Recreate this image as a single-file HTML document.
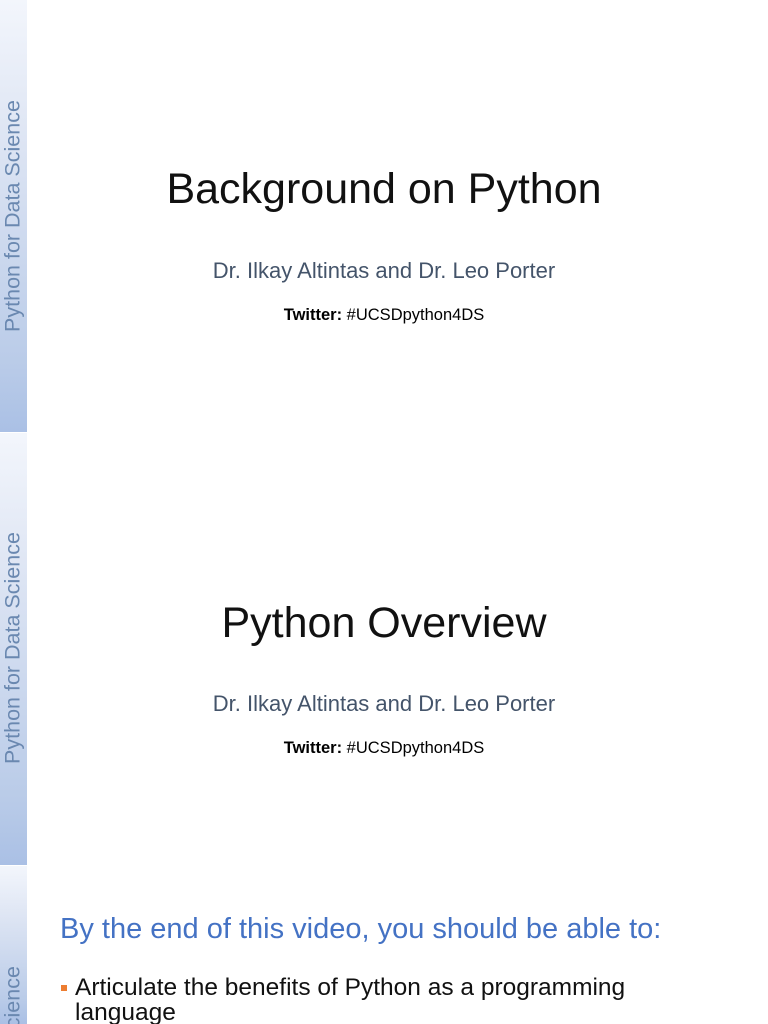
<!DOCTYPE html>
<html><head><meta charset="utf-8"><style>
html,body{margin:0;width:768px;height:1024px;overflow:hidden}
body{background:#fff;position:relative;font-family:"Liberation Sans",sans-serif}
#w{position:absolute;left:0;top:0;width:768px;height:1024px;overflow:hidden}
.strip{position:absolute;left:0;width:27px;height:432px;background:linear-gradient(#f3f6fc,#dfe6f4 30%,#b9cbe8 85%,#aac0e5)}
.vt{position:absolute;width:300px;text-align:center;transform:translate(-50%,-50%) rotate(-90deg);color:#6a88b0;font-size:21.5px;white-space:nowrap}
.a{position:absolute;white-space:nowrap}
.t{font-size:43px;color:#111;width:768px;left:0;text-align:center}
.s{font-size:22px;color:#44546a;width:768px;left:0;text-align:center}
.w{font-size:16.5px;color:#000;width:768px;left:0;text-align:center}
</style></head><body><div id="w">
<div class="strip" style="top:0"></div>
<div class="strip" style="top:433px"></div>
<div class="strip" style="top:866px;height:158px"></div>
<div class="vt" style="top:216px;left:13px">Python for Data Science</div>
<div class="vt" style="top:648px;left:13px">Python for Data Science</div>
<div class="vt" style="top:1082px;left:13px">Python for Data Science</div>

<div class="a t" style="top:165px">Background on Python</div>
<div class="a s" style="top:258px">Dr. Ilkay Altintas and Dr. Leo Porter</div>
<div class="a w" style="top:306px"><b>Twitter:</b> #UCSDpython4DS</div>

<div class="a t" style="top:599px">Python Overview</div>
<div class="a s" style="top:691px">Dr. Ilkay Altintas and Dr. Leo Porter</div>
<div class="a w" style="top:739px"><b>Twitter:</b> #UCSDpython4DS</div>

<div class="a" style="left:60px;top:913px;font-size:29px;color:#4472c4">By the end of this video, you should be able to:</div>
<div class="a" style="left:61px;top:985px;width:6px;height:6px;background:#ed7d31"></div>
<div class="a" style="left:75px;top:975px;font-size:24.5px;color:#111;line-height:25px">Articulate the benefits of Python as a programming<br>language</div>
</div></body></html>
